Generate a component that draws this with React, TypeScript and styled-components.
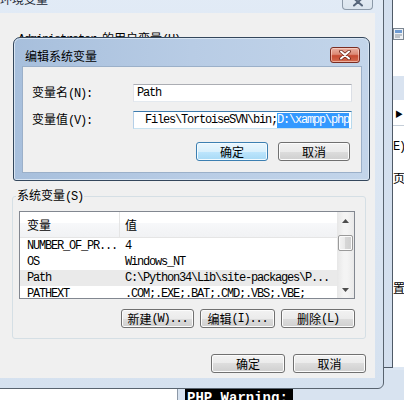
import React from 'react';
import styled, { createGlobalStyle } from 'styled-components';

const CJK = `"Noto Sans CJK SC", "Noto Sans", sans-serif`;
const MONO = `"Liberation Mono", "DejaVu Sans Mono", monospace`;

const GlobalStyle = createGlobalStyle`
  html, body { margin: 0; padding: 0; }
  body { background: #dde7f3; font-family: ${CJK}; font-size: 12px; color: #000; }
  *, *::before, *::after { box-sizing: border-box; }
`;

const Desktop = styled.div`
  position: relative;
  width: 404px;
  height: 400px;
  overflow: hidden;
  background: #dde7f3;
`;

const Latin = styled.span`
  font-family: ${MONO};
  font-size: 12px;
  letter-spacing: -1.2px;
`;

/* ---------- windows behind ---------- */
const SideWin = styled.div`
  position: absolute;
  left: 393px;
  top: 0;
  width: 40px;
  height: 367px;
  background: #fff;
  display: flex;
  flex-direction: column;
`;
const SideIcon = styled.svg`
  margin-top: 28px;
  flex: none;
`;
const SideBand = styled.div`
  margin-top: 36px;
  height: 24px;
  background: #d9e3f0;
`;
const SideGlyph = styled.div<{ $top: number }>`
  margin-top: ${p => p.$top}px;
  line-height: 12px;
  height: 12px;
  font-size: 12px;
  color: #000;
`;
const SideArrow = styled.div`
  margin-top: 8px;
  line-height: 12px;
  font-size: 8px;
  padding-left: 2px;
`;
const SideRule = styled.div`
  margin-top: 5px;
  height: 1px;
  background: #c5ced8;
`;

const BehindWin = styled.div`
  position: absolute;
  left: 300px;
  top: -30px;
  width: 93px;
  height: 398px;
  background: linear-gradient(to right, #dfe8f4, #d3dfee);
  border-right: 1px solid #4f5a67;
  border-bottom: 1px solid #4f5a67;
`;

const WhiteWin = styled.div`
  position: absolute;
  left: -5px;
  top: 370px;
  width: 183px;
  height: 40px;
  background: #fff;
  border-right: 1px solid #8d99a8;
`;

const ConsoleWin = styled.div`
  position: absolute;
  left: 178px;
  top: 370px;
  width: 240px;
  height: 40px;
  background: #d8e3f0;
  padding-left: 7px;
  display: flex;
`;
const ConsoleScreen = styled.div`
  margin-top: 18px;
  width: 108px;
  background: #000;
  color: #fff;
  font-family: ${MONO};
  font-weight: bold;
  font-size: 14px;
  line-height: 14px;
  padding: 3px 0 0 2px;
  white-space: nowrap;
  overflow: hidden;
`;

/* ---------- environment variables window ---------- */
const EnvWin = styled.div`
  position: absolute;
  left: -9px;
  top: -22px;
  width: 393px;
  height: 411px;
  border: 1px solid #58636f;
  border-radius: 6px;
  background: linear-gradient(to bottom, #e2ebf6, #d5e1ef);
  padding: 0 8px 10px;
  display: flex;
  flex-direction: column;
`;
const EnvTitleBar = styled.div`
  height: 34px;
  display: flex;
  align-items: flex-start;
`;
const EnvTitle = styled.div`
  margin-top: 14px;
  line-height: 12px;
  color: #1b2633;
`;
const EnvClose = styled.div`
  margin-left: auto;
  margin-right: 2px;
  width: 31px;
  height: 31px;
  border: 1px solid #8c99a8;
  border-top: none;
  border-radius: 0 0 4px 4px;
  background: linear-gradient(#eef3f9, #dbe4ee);
  display: flex;
  align-items: flex-end;
  justify-content: center;
  padding-bottom: 2px;
`;
const EnvClient = styled.div`
  flex: 1;
  background: #f0f0f0;
  display: flex;
  flex-direction: column;
`;
const UserLabel = styled.div`
  margin: 19px 0 0 18px;
  line-height: 12px;
  white-space: nowrap;
`;
const UserVarsPanel = styled.div`
  height: 143px;
`;
const Group = styled.fieldset`
  margin: 0 0 0 12px;
  width: 354px;
  min-inline-size: 0;
  border: 1px solid #d5dfe5;
  border-radius: 3px;
  padding: 8px 10px 10px 6px;
  display: flex;
  flex-direction: column;
`;
const GroupLegend = styled.legend`
  margin-left: -3px;
  padding: 0 1px;
  line-height: 12px;
`;

/* list view */
const ListView = styled.div`
  height: 88px;
  border: 1px solid #828790;
  background: #fff;
  display: flex;
  overflow: hidden;
`;
const ListBody = styled.div`
  flex: 1;
  display: flex;
  flex-direction: column;
  overflow: hidden;
`;
const ListHeader = styled.div`
  flex: none;
  height: 26px;
  display: grid;
  grid-template-columns: 100px 1fr;
  background: linear-gradient(#ffffff 0%, #ffffff 45%, #f7f8fa 45%, #f1f2f4 100%);
  border-bottom: 1px solid #e5e5e5;
`;
const HeaderCell = styled.div<{ $pad: number; $divider?: boolean }>`
  padding-left: ${p => p.$pad}px;
  display: flex;
  align-items: center;
  line-height: 12px;
  border-right: ${p => (p.$divider ? '1px solid #e5e5e5' : 'none')};
`;
const ListRow = styled.div<{ $selected?: boolean }>`
  flex: none;
  height: 16px;
  display: grid;
  grid-template-columns: 100px 1fr;
  background: ${p => (p.$selected ? '#eaeaea' : 'transparent')};
  font-family: ${MONO};
  font-size: 12px;
  letter-spacing: -1.2px;
  line-height: 16px;
  white-space: nowrap;
`;
const RowCell = styled.div<{ $pad: number }>`
  padding-left: ${p => p.$pad}px;
  overflow: hidden;
`;
const ScrollBar = styled.div`
  width: 17px;
  flex: none;
  display: flex;
  flex-direction: column;
  background: linear-gradient(to right, #e7e7e7, #f4f4f4 40%, #f4f4f4 60%, #e9e9e9);
`;
const ScrollArrow = styled.div<{ $end?: boolean }>`
  height: 17px;
  flex: none;
  display: flex;
  align-items: center;
  justify-content: center;
  margin-top: ${p => (p.$end ? 'auto' : '0')};
`;
const ScrollThumb = styled.div`
  margin: 6px 1px 0;
  height: 16px;
  border: 1px solid #9a9a9a;
  border-radius: 2px;
  background: linear-gradient(to right, #f3f3f3, #e8e8e8 50%, #d6d6d6 50%, #cfcfcf);
  box-shadow: inset 0 0 0 1px #fbfbfb;
`;

/* buttons */
const ButtonRow = styled.div<{ $gap: number; $mt: number; $pr?: number }>`
  display: flex;
  justify-content: flex-end;
  gap: ${p => p.$gap}px;
  margin-top: ${p => p.$mt}px;
  padding-right: ${p => p.$pr ?? 0}px;
`;
const Btn = styled.div<{ $w: number; $default?: boolean }>`
  width: ${p => p.$w}px;
  height: 19px;
  flex: none;
  border: 1px solid ${p => (p.$default ? '#3c7fb1' : '#707070')};
  border-radius: 3px;
  background: ${p =>
    p.$default
      ? 'linear-gradient(#eaf6fd 0%, #d9f0fc 50%, #bee6fd 50%, #a7d9f5 100%)'
      : 'linear-gradient(#f2f2f2 0%, #ebebeb 50%, #dddddd 50%, #cfcfcf 100%)'};
  box-shadow: inset 0 0 0 1px ${p => (p.$default ? '#f2fbff' : '#fcfcfc')};
  display: flex;
  align-items: center;
  justify-content: center;
  line-height: 12px;
  white-space: nowrap;
`;

/* ---------- edit dialog ---------- */
const EditDlg = styled.div`
  position: absolute;
  left: 13px;
  top: 37px;
  width: 357px;
  height: 144px;
  border: 1px solid #34475c;
  border-radius: 7px 7px 3px 3px;
  background: linear-gradient(to right, #a7bfdc, #b8cce5 50%, #c3d5ea);
  box-shadow: inset 0 0 0 1px #d8e5f3;
  padding: 0 7px 7px 8px;
  display: flex;
  flex-direction: column;
`;
const DlgTitleBar = styled.div`
  height: 28px;
  flex: none;
  display: flex;
  align-items: flex-start;
`;
const DlgTitle = styled.div`
  margin: 12px 0 0 3px;
  line-height: 12px;
`;
const DlgClose = styled.div`
  margin: 9px 2px 0 auto;
  width: 30px;
  height: 16px;
  border: 1px solid #7a2d22;
  border-radius: 3px;
  background: linear-gradient(#eab0a2 0%, #dc8a75 45%, #c74a31 55%, #d26c50 100%);
  box-shadow: inset 0 0 0 1px rgba(255, 220, 210, 0.6);
  display: flex;
  align-items: center;
  justify-content: center;
`;
const DlgClient = styled.div`
  flex: 1;
  background: #f0f0f0;
  border: 1px solid #9bb0c9;
  padding: 17px 9px 0 9px;
  display: grid;
  grid-template-columns: 101px 1fr;
  grid-auto-rows: 18px;
  row-gap: 9px;
  align-items: center;
`;
const FieldLabel = styled.div`
  line-height: 12px;
  white-space: nowrap;
`;
const TextBox = styled.div<{ $focused?: boolean }>`
  height: 18px;
  border: 1px solid;
  border-color: ${p => (p.$focused ? '#3d7bad #b7d9ed #c7e2f1 #b5cfe7' : '#abadb3 #dbdfe6 #e3e9ef #e2e3ea')};
  background: #fff;
  display: flex;
  align-items: center;
  justify-content: ${p => (p.$focused ? 'flex-end' : 'flex-start')};
  padding: 0 2px 0 3px;
  overflow: hidden;
  white-space: nowrap;
  font-family: ${MONO};
  font-size: 12px;
  letter-spacing: -1.2px;
  line-height: 14px;
`;
const Selected = styled.span`
  display: inline-block;
  background: #3399ff;
  color: #fff;
  line-height: 15px;
`;
const DlgButtons = styled(ButtonRow)`
  grid-column: 1 / span 2;
  align-self: start;
`;

const XIcon = ({ color, outline }: { color: string; outline?: string }) => (
  <svg width="12" height="10" viewBox="0 0 12 10">
    {outline && <path d="M2 1.5 L10 8.5 M10 1.5 L2 8.5" stroke={outline} strokeWidth="3.6" strokeLinecap="round" />}
    <path d="M2 1.5 L10 8.5 M10 1.5 L2 8.5" stroke={color} strokeWidth="2" strokeLinecap="round" />
  </svg>
);

const Tri = ({ up }: { up?: boolean }) => (
  <svg width="7" height="4" viewBox="0 0 7 4">
    <path d={up ? 'M0 4 L3.5 0 L7 4 Z' : 'M0 0 L7 0 L3.5 4 Z'} fill="#4d4d4d" />
  </svg>
);

const rows = [
  { name: 'NUMBER_OF_PR...', value: '4' },
  { name: 'OS', value: 'Windows_NT' },
  { name: 'Path', value: 'C:\\Python34\\Lib\\site-packages\\P...', selected: true },
  { name: 'PATHEXT', value: '.COM;.EXE;.BAT;.CMD;.VBS;.VBE;' },
];

export default function App() {
  return (
    <>
      <GlobalStyle />
      <Desktop>
        <SideWin>
          <SideIcon width="11" height="12" viewBox="0 0 11 12">
            <rect x="0.5" y="0.5" width="10" height="11" fill="#eef1f5" stroke="#7d8792" />
            <rect x="2" y="2" width="7" height="3" fill="#6f9bd1" />
            <path d="M2 7 H9 M2 9 H7" stroke="#8a939c" />
          </SideIcon>
          <SideBand />
          <SideArrow>▶</SideArrow>
          <SideRule />
          <SideGlyph $top={13}>
            <Latin>E)</Latin>
          </SideGlyph>
          <SideGlyph $top={21}>页</SideGlyph>
          <SideGlyph $top={98}>置</SideGlyph>
        </SideWin>
        <BehindWin />
        <WhiteWin />
        <ConsoleWin>
          <ConsoleScreen>PHP Warning:</ConsoleScreen>
        </ConsoleWin>

        <EnvWin>
          <EnvTitleBar>
            <EnvTitle>环境变量</EnvTitle>
            <EnvClose>
              <XIcon color="#56657a" />
            </EnvClose>
          </EnvTitleBar>
          <EnvClient>
            <UserLabel>
              <Latin>Administrator </Latin>的用户变量<Latin>(U)</Latin>
            </UserLabel>
            <UserVarsPanel />
            <Group>
              <GroupLegend>
                系统变量<Latin>(S)</Latin>
              </GroupLegend>
              <ListView>
                <ListBody>
                  <ListHeader>
                    <HeaderCell $pad={7} $divider>
                      变量
                    </HeaderCell>
                    <HeaderCell $pad={5}>值</HeaderCell>
                  </ListHeader>
                  {rows.map(r => (
                    <ListRow key={r.name} $selected={r.selected}>
                      <RowCell $pad={7}>{r.name}</RowCell>
                      <RowCell $pad={5}>{r.value}</RowCell>
                    </ListRow>
                  ))}
                </ListBody>
                <ScrollBar>
                  <ScrollArrow>
                    <Tri up />
                  </ScrollArrow>
                  <ScrollThumb />
                  <ScrollArrow $end>
                    <Tri />
                  </ScrollArrow>
                </ScrollBar>
              </ListView>
              <ButtonRow $gap={6} $mt={10}>
                <Btn $w={73}>
                  新建<Latin>(W)...</Latin>
                </Btn>
                <Btn $w={75}>
                  编辑<Latin>(I)...</Latin>
                </Btn>
                <Btn $w={74}>
                  删除<Latin>(L)</Latin>
                </Btn>
              </ButtonRow>
            </Group>
            <ButtonRow $gap={8} $mt={15} $pr={9}>
              <Btn $w={74}>确定</Btn>
              <Btn $w={73}>取消</Btn>
            </ButtonRow>
          </EnvClient>
        </EnvWin>

        <EditDlg>
          <DlgTitleBar>
            <DlgTitle>编辑系统变量</DlgTitle>
            <DlgClose>
              <XIcon color="#ffffff" outline="#6b2418" />
            </DlgClose>
          </DlgTitleBar>
          <DlgClient>
            <FieldLabel>
              变量名<Latin>(N):</Latin>
            </FieldLabel>
            <TextBox>Path</TextBox>
            <FieldLabel>
              变量值<Latin>(V):</Latin>
            </FieldLabel>
            <TextBox $focused>
              <span> Files\TortoiseSVN\bin;</span>
              <Selected>D:\xampp\php</Selected>
            </TextBox>
            <DlgButtons $gap={10} $mt={4} $pr={2}>
              <Btn $w={72} $default>
                确定
              </Btn>
              <Btn $w={72}>取消</Btn>
            </DlgButtons>
          </DlgClient>
        </EditDlg>
      </Desktop>
    </>
  );
}
